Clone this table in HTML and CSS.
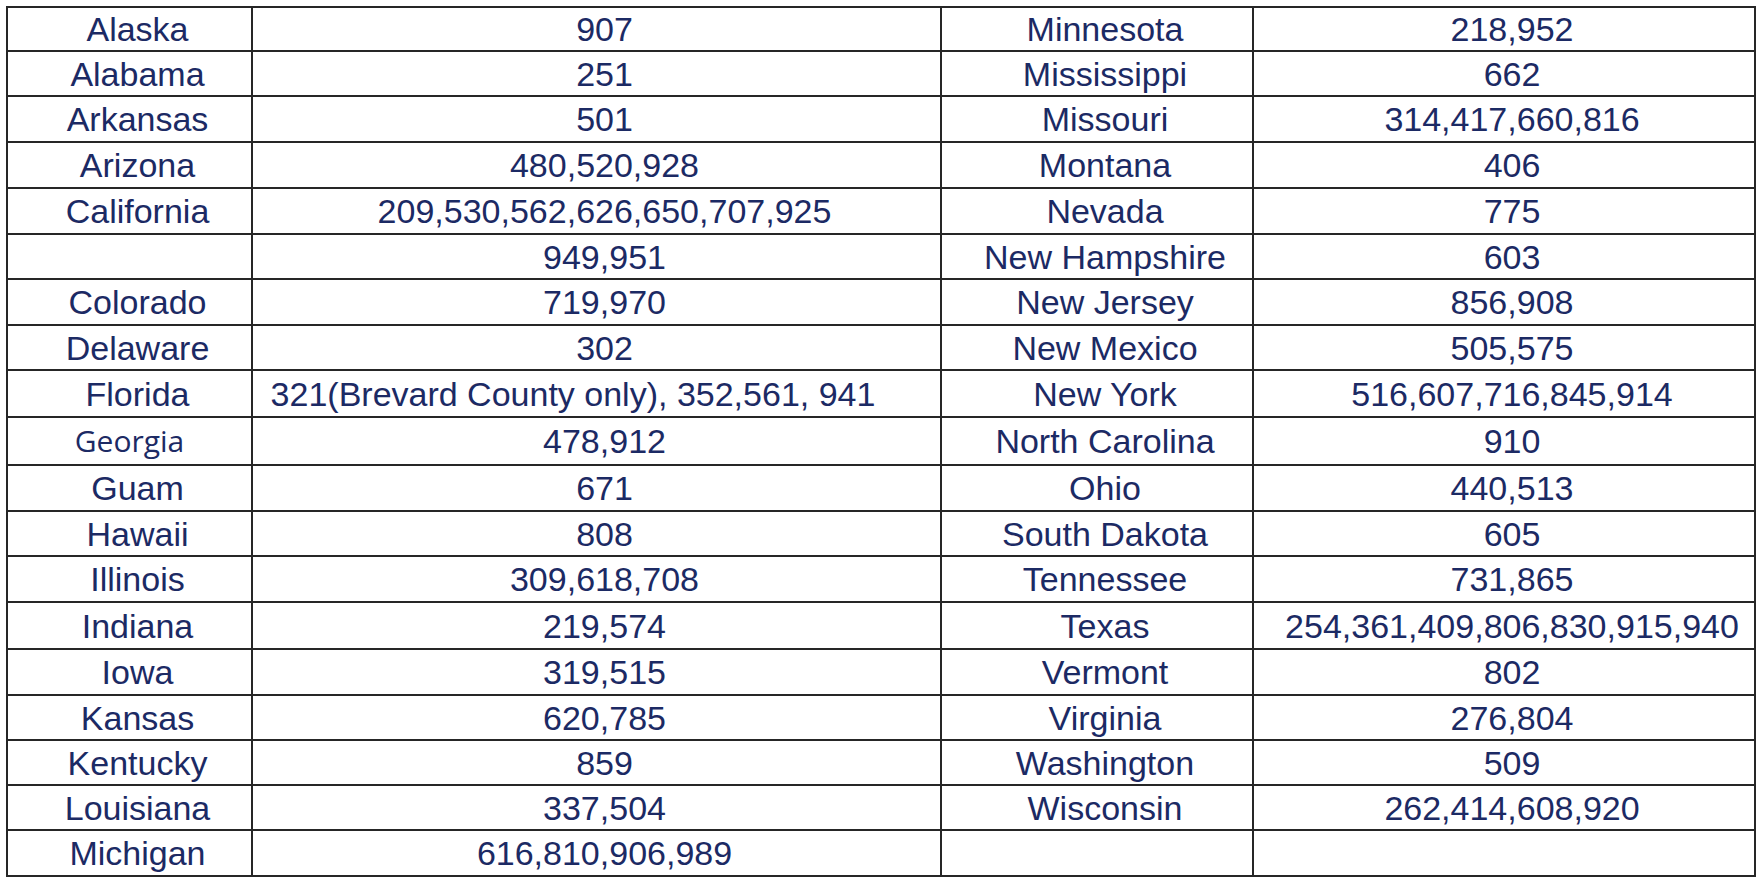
FILE: index.html
```html
<!DOCTYPE html>
<html lang="en">
<head>
<meta charset="utf-8">
<title>Area codes by state</title>
<link rel="stylesheet" href="styles.css">
</head>
<body>
<div class="grid">
  <div class="cell">Alaska</div><div class="cell">907</div><div class="cell">Minnesota</div><div class="cell">218,952</div>
  <div class="cell">Alabama</div><div class="cell">251</div><div class="cell">Mississippi</div><div class="cell">662</div>
  <div class="cell">Arkansas</div><div class="cell">501</div><div class="cell">Missouri</div><div class="cell">314,417,660,816</div>
  <div class="cell">Arizona</div><div class="cell">480,520,928</div><div class="cell">Montana</div><div class="cell">406</div>
  <div class="cell">California</div><div class="cell">209,530,562,626,650,707,925</div><div class="cell">Nevada</div><div class="cell">775</div>
  <div class="cell"></div><div class="cell">949,951</div><div class="cell">New Hampshire</div><div class="cell">603</div>
  <div class="cell">Colorado</div><div class="cell">719,970</div><div class="cell">New Jersey</div><div class="cell">856,908</div>
  <div class="cell">Delaware</div><div class="cell">302</div><div class="cell">New Mexico</div><div class="cell">505,575</div>
  <div class="cell">Florida</div><div class="cell cell-left">321(Brevard County only), 352,561, 941</div><div class="cell">New York</div><div class="cell">516,607,716,845,914</div>
  <div class="cell alt">Georgia</div><div class="cell">478,912</div><div class="cell">North Carolina</div><div class="cell">910</div>
  <div class="cell">Guam</div><div class="cell">671</div><div class="cell">Ohio</div><div class="cell">440,513</div>
  <div class="cell">Hawaii</div><div class="cell">808</div><div class="cell">South Dakota</div><div class="cell">605</div>
  <div class="cell">Illinois</div><div class="cell">309,618,708</div><div class="cell">Tennessee</div><div class="cell">731,865</div>
  <div class="cell">Indiana</div><div class="cell">219,574</div><div class="cell">Texas</div><div class="cell">254,361,409,806,830,915,940</div>
  <div class="cell">Iowa</div><div class="cell">319,515</div><div class="cell">Vermont</div><div class="cell">802</div>
  <div class="cell">Kansas</div><div class="cell">620,785</div><div class="cell">Virginia</div><div class="cell">276,804</div>
  <div class="cell">Kentucky</div><div class="cell">859</div><div class="cell">Washington</div><div class="cell">509</div>
  <div class="cell">Louisiana</div><div class="cell">337,504</div><div class="cell">Wisconsin</div><div class="cell">262,414,608,920</div>
  <div class="cell">Michigan</div><div class="cell">616,810,906,989</div><div class="cell"></div><div class="cell"></div>
</div>
</body>
</html>
```
FILE: styles.css
```css
html, body {
  margin: 0;
  padding: 0;
  background: #ffffff;
}

body {
  padding: 6px 0 0 6px;
  font-family: "Liberation Sans", Arial, sans-serif;
  color: #1c2a64;
}

.grid {
  display: grid;
  width: 1746px;
  padding: 2px;
  gap: 2px;
  background: #262626;
  grid-template-columns: 243px 687px 310px 500px;
  grid-template-rows: 42px 43px 44px 44px 44px 43px 44px 43px 45px 46px 44px 43px 44px 45px 44px 43px 43px 43px 44px;
}

.cell {
  background: #ffffff;
  display: flex;
  align-items: center;
  justify-content: center;
  padding-left: 16px;
  font-size: 34px;
  line-height: 1;
  white-space: nowrap;
  overflow: hidden;
}

.cell-left {
  padding-left: 0;
  padding-right: 47px;
}

.alt {
  padding-left: 0;
  font-family: "Open Sans", "Liberation Sans", sans-serif;
  font-size: 30px;
}
```
